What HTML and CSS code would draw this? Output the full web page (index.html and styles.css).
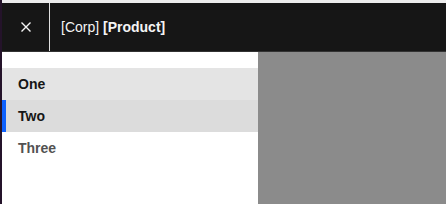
FILE: index.html
```html
<!DOCTYPE html>
<html>
<head>
  <title>UI Shell</title>
  <link rel="stylesheet" href="styles.css">
</head>
<body>
  <div class="topline"></div>
  <header class="header">
    <button class="menu-toggle" aria-label="Close menu">
      <svg width="20" height="20" viewBox="0 0 20 20">
        <path d="M5.5 5.5 L14.5 14.5 M14.5 5.5 L5.5 14.5" stroke="#f4f4f4" stroke-width="1.4" fill="none"/>
      </svg>
    </button>
    <a class="header-name" href="#">[Corp]&nbsp;<span class="prefix">[Product]</span></a>
  </header>
  <div class="main">
    <nav class="side-nav">
      <ul class="nav-items">
        <li><a class="nav-link hover" href="#">One</a></li>
        <li><a class="nav-link current" href="#">Two</a></li>
        <li><a class="nav-link" href="#">Three</a></li>
      </ul>
    </nav>
    <div class="content"></div>
  </div>
</body>
</html>
```

FILE: styles.css
```css
html, body {
  height: 100%;
}
body {
  margin: 0;
  font-family: "Liberation Sans", Arial, sans-serif;
  background-color: #fff;
  border-left: 2px solid #24132a;
  display: flex;
  flex-direction: column;
  box-sizing: border-box;
}
.topline {
  height: 3px;
  background-color: #ececec;
}
.header {
  display: flex;
  align-items: center;
  height: 48px;
  background-color: #161616;
  border-bottom: 1px solid #333;
}
.menu-toggle {
  width: 48px;
  height: 48px;
  padding: 0;
  border: none;
  border-left: 1px solid #161616;
  border-right: 1px solid #e0e0e0;
  background-color: #161616;
  display: flex;
  align-items: center;
  justify-content: center;
  cursor: pointer;
}
.menu-toggle svg {
  display: block;
}
.header-name {
  padding-left: 11px;
  font-size: 14px;
  color: #f4f4f4;
  text-decoration: none;
}
.header-name .prefix {
  font-weight: bold;
}
.main {
  flex: 1;
  display: flex;
}
.side-nav {
  width: 256px;
  padding-top: 16px;
  background-color: #fff;
}
.nav-items {
  list-style: none;
  margin: 0;
  padding: 0;
}
.nav-link {
  display: flex;
  align-items: center;
  height: 32px;
  padding-left: 16px;
  font-size: 14px;
  font-weight: bold;
  color: #525252;
  text-decoration: none;
}
.nav-link.hover {
  background-color: #e4e4e4;
  color: #161616;
}
.nav-link.current {
  background-color: #dcdcdc;
  color: #161616;
  box-shadow: inset 4px 0 0 #0f62fe;
}
.content {
  flex: 1;
  background-color: #8b8b8b;
}
```
